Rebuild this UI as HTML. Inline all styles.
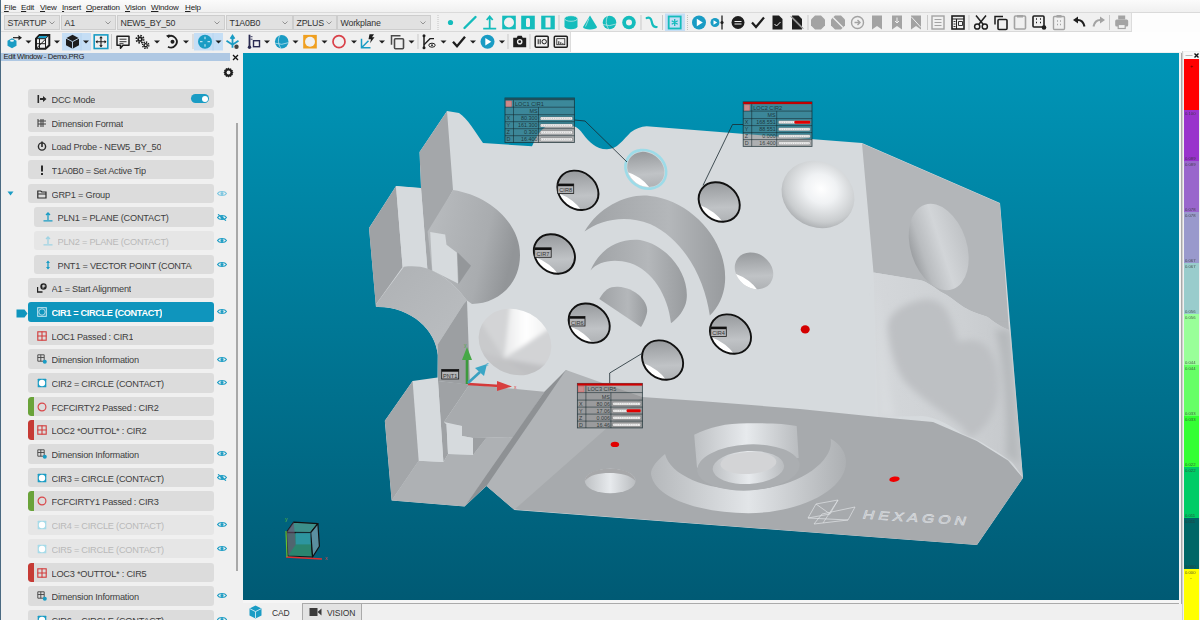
<!DOCTYPE html>
<html><head><meta charset="utf-8">
<style>
*{margin:0;padding:0;box-sizing:border-box}
html,body{width:1200px;height:620px;overflow:hidden;background:#f0f0f0;font-family:"Liberation Sans",sans-serif;position:relative}
.a{position:absolute}
#menubar{left:0;top:0;width:1200px;height:13px;background:linear-gradient(#fbfbfb,#f0f0f0);border-bottom:1px solid #dadada}
#menubar span{position:absolute;top:2.5px;font-size:8px;color:#222;letter-spacing:-0.15px}
#tb1{left:0;top:13px;width:1132px;height:19px;background:#f0f0f0;border-bottom:1px solid #d9d9d9;border-right:1px solid #dcdcdc}
#tb1r{left:1132px;top:13px;width:68px;height:19px;background:#fdfdfd}
#tb2{left:0;top:32px;width:571px;height:20px;background:#f0f0f0;border-right:1px solid #dcdcdc}
#tb2r{left:571px;top:32px;width:629px;height:20px;background:#fefefe}
.combo{position:absolute;top:15px;height:15px;background:#e1e1e1;border:1px solid #cdcdcd;font-size:8.8px;color:#333;line-height:14px;padding-left:2.5px;letter-spacing:-0.2px}
.combo i{position:absolute;right:4px;top:5px;width:6px;height:4px}
#lp{left:0;top:52px;width:243px;height:568px;background:#f0f0f0;border-left:1px solid #44627a}
#ttl{left:1px;top:52.5px;width:229px;height:8px;background:#afc8e3;font-size:7.6px;line-height:8.5px;color:#222;padding-left:2.5px;letter-spacing:-0.33px}
.row{position:absolute;left:28px;width:186px;height:19.5px;background:#dcdcdc;border-radius:3px;font-size:9.2px;color:#404040;line-height:22px;padding-left:23.5px;padding-right:22px;white-space:nowrap;overflow:hidden;letter-spacing:-0.22px}
.row.ind{left:34px;width:180px;padding-left:23.5px}
.row.dis{background:#e6e6e6;color:#b9b9b9}
.row.sel{background:#0f95bd;color:#fff;font-weight:bold;letter-spacing:-0.35px}
.row .ic{position:absolute;left:9px;top:5px;width:10px;height:10px}
.row.ind .ic{left:9px}
.eye{position:absolute;left:217px;width:10px;height:7px}
#vp{left:243px;top:53px;width:936px;height:547px;background:linear-gradient(#0096b8,#005a74)}
#tabs{left:243px;top:600px;width:957px;height:20px;background:#f0f0f0}
.bar{position:absolute;left:0;top:0;width:5.5px;height:19.5px;border-radius:3px 0 0 3px}
.tog{position:absolute;left:163px;top:5.5px;width:18px;height:9px;border-radius:5px;background:#1a9cc4}
.tog div{position:absolute;right:1.5px;top:1.5px;width:6px;height:6px;border-radius:3px;background:#fff}
</style></head><body>
<div id="menubar" class="a">
<span style="left:4px"><u>F</u>ile</span><span style="left:21px"><u>E</u>dit</span><span style="left:40px"><u>V</u>iew</span><span style="left:62px"><u>I</u>nsert</span><span style="left:86px"><u>O</u>peration</span><span style="left:125px"><u>V</u>ision</span><span style="left:151px"><u>W</u>indow</span><span style="left:185px"><u>H</u>elp</span>
</div>
<div id="tb1" class="a"></div><div id="tb1r" class="a"></div>
<div id="tb2" class="a"></div><div id="tb2r" class="a"></div>
<div class="combo" style="left:4px;width:56px">STARTUP<svg style="position:absolute;right:4px;top:5px" width="6" height="4" viewBox="0 0 6 4"><path d="M0.5 0.5L3 3L5.5 0.5" stroke="#8a8a8a" stroke-width="0.9" fill="none"/></svg></div>
<div class="combo" style="left:61px;width:55px">A1<svg style="position:absolute;right:4px;top:5px" width="6" height="4" viewBox="0 0 6 4"><path d="M0.5 0.5L3 3L5.5 0.5" stroke="#8a8a8a" stroke-width="0.9" fill="none"/></svg></div>
<div class="combo" style="left:117px;width:108px">NEW5_BY_50<svg style="position:absolute;right:4px;top:5px" width="6" height="4" viewBox="0 0 6 4"><path d="M0.5 0.5L3 3L5.5 0.5" stroke="#8a8a8a" stroke-width="0.9" fill="none"/></svg></div>
<div class="combo" style="left:226px;width:67px">T1A0B0<svg style="position:absolute;right:4px;top:5px" width="6" height="4" viewBox="0 0 6 4"><path d="M0.5 0.5L3 3L5.5 0.5" stroke="#8a8a8a" stroke-width="0.9" fill="none"/></svg></div>
<div class="combo" style="left:293px;width:44px">ZPLUS<svg style="position:absolute;right:4px;top:5px" width="6" height="4" viewBox="0 0 6 4"><path d="M0.5 0.5L3 3L5.5 0.5" stroke="#8a8a8a" stroke-width="0.9" fill="none"/></svg></div>
<div class="combo" style="left:337px;width:94px">Workplane<svg style="position:absolute;right:4px;top:5px" width="6" height="4" viewBox="0 0 6 4"><path d="M0.5 0.5L3 3L5.5 0.5" stroke="#8a8a8a" stroke-width="0.9" fill="none"/></svg></div>

<div id="lp" class="a"></div>
<div id="ttl" class="a">Edit Window - Demo.PRG</div>

<div id="vp" class="a"></div>
<div id="tabs" class="a"></div>
<div class="a" style="left:0;top:0;width:1px;height:620px;background:#4a6a82"></div><svg class="a" style="left:0;top:0" width="1200" height="53" viewBox="0 0 1200 53"><line x1="438" y1="15" x2="438" y2="30" stroke="#b8b8b8" stroke-width="0.8" stroke-dasharray="1 1"/><g transform="translate(450.5,22.5)"><circle r="2.6" fill="#14bcbc"/></g><g transform="translate(470,22.5)"><path d="M-5.5,5.5 L5.5,-5.5" stroke="#14bcbc" stroke-width="2.4" stroke-linecap="round"/></g><g transform="translate(489.7,22.5)"><path d="M-6.5,6.2 h13 M0,5.5 v-10 M-3,-2.5 l3,-3.5 3,3.5" stroke="#14bcbc" stroke-width="1.8" fill="none"/></g><g transform="translate(509,22.5)"><rect x="-6.8" y="-6.8" width="13.6" height="13.6" fill="#14bcbc"/><circle r="5" fill="#f0f0f0"/></g><g transform="translate(528,22.5)"><rect x="-6.8" y="-6.8" width="13.6" height="13.6" fill="#14bcbc"/><rect x="-2" y="-4.5" width="4" height="9" rx="1.5" fill="#f0f0f0"/></g><g transform="translate(548,22.5)"><rect x="-6.8" y="-6.8" width="13.6" height="13.6" fill="#14bcbc"/><rect x="-2.5" y="-5" width="5" height="10" fill="#f0f0f0"/></g><line x1="559" y1="15" x2="559" y2="30" stroke="#c9c9c9" stroke-width="1"/><g transform="translate(571,22.5)"><path d="M-6.5,-4 v8 a6.5,2.8 0 0 0 13,0 v-8z" fill="#14bcbc"/><ellipse cy="-4" rx="6.5" ry="2.8" fill="#14bcbc" stroke="#f0f0f0" stroke-width="0.6"/></g><g transform="translate(590,22.5)"><path d="M0,-7 L-7,4.5 a7,2.6 0 0 0 14,0z" fill="#14bcbc"/><path d="M-1,-4 L-4.5,4" stroke="#f0f0f0" stroke-width="0.6"/></g><g transform="translate(609.5,22.5)"><circle r="6.8" fill="#14bcbc"/><path d="M-6.5,2 Q0,4.5 6.5,1.5 M-2,-6.5 Q-5,0 -1,6.5" stroke="#f0f0f0" stroke-width="0.6" fill="none"/></g><g transform="translate(629,22.5)"><circle r="6.8" fill="#14bcbc"/><circle r="3" fill="#f0f0f0"/></g><line x1="641" y1="15" x2="641" y2="30" stroke="#c9c9c9" stroke-width="1"/><g transform="translate(651.7,22.5)"><path d="M-5,-4.5 Q-1,-6 0,-1 Q1,5 5,4.5" stroke="#14bcbc" stroke-width="2.2" fill="none" stroke-linecap="round"/></g><line x1="662.5" y1="15" x2="662.5" y2="30" stroke="#c9c9c9" stroke-width="1"/><rect x="665" y="13.5" width="20" height="17.5" fill="#c5def5"/><g transform="translate(674.7,22.5)"><rect x="-6" y="-6" width="12" height="12" fill="none" stroke="#14bcbc" stroke-width="1.8"/><path d="M0,-3.5 v7 M-3,-1.8 l6,3.6 M3,-1.8 l-6,3.6" stroke="#14bcbc" stroke-width="1.3"/></g><line x1="687.5" y1="15" x2="687.5" y2="30" stroke="#b8b8b8" stroke-width="0.8" stroke-dasharray="1 1"/><g transform="translate(699,22.5)"><circle r="7" fill="#1a9cc4"/><path d="M-2.2,-3.8 L3.8,0 L-2.2,3.8z" fill="#fff"/></g><g transform="translate(718,22.5)"><circle cx="-3" r="4.5" fill="#1a9cc4"/><path d="M-4.5,-2.2 L-0.8,0 L-4.5,2.2z" fill="#fff"/><path d="M4,-7 v14" stroke="#1e1e1e" stroke-width="1.3"/><circle cx="4" r="1.6" fill="#1e1e1e"/></g><g transform="translate(738,22.5)"><circle r="6.5" fill="#1e1e1e"/><path d="M-3.5,-1 h7 M-3.5,1.5 h7" stroke="#f0f0f0" stroke-width="1"/></g><g transform="translate(758,22.5)"><path d="M-6,0 L-2,4.5 L6,-5" stroke="#1e1e1e" stroke-width="2.2" fill="none"/></g><g transform="translate(777.5,22.5)"><path d="M-5,-7 h6.5 l3.5,3.5 v10.5 h-10z" fill="#1e1e1e"/><path d="M-3,1.5 l2,2 4,-4" stroke="#f0f0f0" stroke-width="1" fill="none"/></g><g transform="translate(797,22.5)"><path d="M-5,-7 h6.5 l3.5,3.5 v10.5 h-10z" fill="#1e1e1e"/><path d="M-6,-6 l12,12" stroke="#f0f0f0" stroke-width="1.6"/><path d="M-6,-6 l12,12" stroke="#1e1e1e" stroke-width="0.8"/></g><line x1="808" y1="15" x2="808" y2="30" stroke="#c9c9c9" stroke-width="1"/><g transform="translate(818,22.5)"><path d="M-3,-7 h6 l4,4 v6 l-4,4 h-6 l-4,-4 v-6z" fill="#a3a3a3"/></g><g transform="translate(838,22.5)"><path d="M-3,-7 h6 l4,4 v6 l-4,4 h-6 l-4,-4 v-6z" fill="#a3a3a3"/><path d="M-5,-5 l10,10" stroke="#f0f0f0" stroke-width="1.2"/></g><g transform="translate(857.5,22.5)"><circle r="6" fill="none" stroke="#a3a3a3" stroke-width="1.4"/><path d="M-3,0 h5 M0,-2.5 l2.5,2.5 -2.5,2.5" stroke="#a3a3a3" stroke-width="1.4" fill="none"/></g><g transform="translate(877,22.5)"><path d="M-5,-7 h10 v14 l-5,-3.5 -5,3.5z" fill="#a3a3a3"/></g><g transform="translate(897,22.5)"><path d="M-5,-7 h10 v14 l-5,-3.5 -5,3.5z" fill="#a3a3a3"/><path d="M0,-5 v5 M-2,-1.5 l2,2 2,-2" stroke="#f0f0f0" stroke-width="1" fill="none"/></g><g transform="translate(916,22.5)"><path d="M-5,-7 h10 v14 l-5,-3.5 -5,3.5z" fill="#a3a3a3"/><path d="M-5,-6 l10,11" stroke="#f0f0f0" stroke-width="1"/></g><line x1="927.5" y1="15" x2="927.5" y2="30" stroke="#c9c9c9" stroke-width="1"/><g transform="translate(938,22.5)"><rect x="-6" y="-6.5" width="12" height="13" fill="none" stroke="#a3a3a3" stroke-width="1.4"/><path d="M-3.5,-3 h7 M-3.5,0 h7 M-3.5,3 h7" stroke="#a3a3a3" stroke-width="1.2"/></g><g transform="translate(958,22.5)"><rect x="-6" y="-6.5" width="12" height="13" fill="none" stroke="#1e1e1e" stroke-width="1.6"/><path d="M-6,-3.5 h12 M-1.5,-3.5 v10" stroke="#1e1e1e" stroke-width="1"/><path d="M-4.5,-1 h2 M-4.5,1.5 h2 M-4.5,4 h2 M0.5,-1 h4 v4 h-4z" stroke="#1e1e1e" stroke-width="0.9" fill="none"/></g><line x1="969" y1="15" x2="969" y2="30" stroke="#c9c9c9" stroke-width="1"/><g transform="translate(981,22.5)"><circle cx="-3.8" cy="4" r="2.6" fill="none" stroke="#1e1e1e" stroke-width="1.5"/><circle cx="3.8" cy="4" r="2.6" fill="none" stroke="#1e1e1e" stroke-width="1.5"/><path d="M-2.3,2 L5,-7 M2.3,2 L-5,-7" stroke="#1e1e1e" stroke-width="1.5"/></g><g transform="translate(1001,22.5)"><path d="M-6,2 v-8 h8" stroke="#1e1e1e" stroke-width="1.5" fill="none"/><rect x="-3" y="-3" width="9" height="10" rx="1" fill="none" stroke="#1e1e1e" stroke-width="1.6"/></g><g transform="translate(1020,22.5)"><rect x="-5.5" y="-6.5" width="11" height="13" rx="1" fill="none" stroke="#a3a3a3" stroke-width="1.6"/><rect x="-3" y="-7.5" width="6" height="2.5" fill="#a3a3a3"/></g><g transform="translate(1039,22.5)"><rect x="-6" y="-6.5" width="11" height="11" rx="1" fill="none" stroke="#1e1e1e" stroke-width="1.6"/><path d="M-3,-3.5 h1 M1,-3.5 h1 M-3,0 h1 M1,0 h1" stroke="#1e1e1e" stroke-width="1.4"/><circle cx="5" cy="5" r="2.3" fill="#1e1e1e"/></g><g transform="translate(1059,22.5)"><rect x="-5.5" y="-6" width="11" height="13" rx="1" fill="none" stroke="#a3a3a3" stroke-width="1.4"/><rect x="-2.5" y="-7.5" width="5" height="2.5" fill="#a3a3a3"/><path d="M-2,-1.5 h1 M1,-1.5 h1 M-2,2 h1 M1,2 h1" stroke="#a3a3a3" stroke-width="1.3"/></g><g transform="translate(1079,22.5)"><path d="M5.5,4 Q4,-3 -2,-2.5 L-2,-2.5" stroke="#1e1e1e" stroke-width="2" fill="none"/><path d="M-6,-2.5 L-1,-6 L-1,1z" fill="#1e1e1e"/></g><g transform="translate(1099,22.5)"><path d="M-5.5,4 Q-4,-3 2,-2.5" stroke="#a3a3a3" stroke-width="2" fill="none"/><path d="M6,-2.5 L1,-6 L1,1z" fill="#a3a3a3"/></g><line x1="1109.5" y1="15" x2="1109.5" y2="30" stroke="#c9c9c9" stroke-width="1"/><g transform="translate(1121.7,22.5)"><rect x="-3.5" y="-7" width="7" height="4" fill="#a3a3a3"/><rect x="-6.5" y="-3" width="13" height="7" rx="1.5" fill="#a3a3a3"/><rect x="-3.5" y="2" width="7" height="4" fill="#f0f0f0" stroke="#a3a3a3" stroke-width="1.2"/></g><rect x="62" y="33" width="29" height="17.5" fill="#c5def5"/><line x1="81" y1="33" x2="81" y2="50.5" stroke="#b3d2ee" stroke-width="0.8"/><rect x="194" y="33" width="29" height="17.5" fill="#c5def5"/><line x1="213" y1="33" x2="213" y2="50.5" stroke="#b3d2ee" stroke-width="0.8"/><g transform="translate(12,43.2)"><path d="M0,-5 L4.5,-2.5 V2.5 L0,5 L-4.5,2.5 V-2.5z" fill="#1a9cc4"/><ellipse cy="-2.5" rx="2" ry="1" fill="#eaf6fb"/></g><g transform="translate(17,37.7)"><path d="M-4,0 h6" stroke="#1e1e1e" stroke-width="1.2"/><path d="M1.5,-2.5 L5,0 L1.5,2.5z" fill="#1e1e1e"/></g><path d="M25.5,40.400000000000006 h6 l-3,3z" fill="#1e1e1e"/><g transform="translate(42.5,41.7)"><path d="M-6.5,-3 L-3,-6.8 H6.8 V3.5 L3,7 H-6.5z" fill="none" stroke="#1e1e1e" stroke-width="2"/><path d="M-3,-5.8 H5.5 L3,-3.2 H-5z" fill="#1a9cc4"/><path d="M-6.5,-3 H3 V7 M3,-3 L6.8,-6.8 M-3,-3 V7 M-6.5,2 H3 M-6,6.5 L3,-2.5" stroke="#1e1e1e" stroke-width="1" fill="none"/></g><path d="M54,40.400000000000006 h6 l-3,3z" fill="#1e1e1e"/><g transform="translate(72.5,41.7)"><path d="M0,-7 L6.5,-3.5 V3.5 L0,7 L-6.5,3.5 V-3.5z" fill="#1e1e1e"/><path d="M-6.5,-3.5 L0,0 L6.5,-3.5 M0,0 V7" stroke="#c5def5" stroke-width="0.9" fill="none"/></g><path d="M83,40.400000000000006 h6 l-3,3z" fill="#1e1e1e"/><g transform="translate(101,41.7)"><rect x="-6.8" y="-6.8" width="13.6" height="13.6" fill="none" stroke="#1a9cc4" stroke-width="1.6"/><path d="M0,-5 V5 M-5,0 H5" stroke="#1e1e1e" stroke-width="1.1"/><path d="M0,-5.5 l-1.8,2 h3.6z M0,5.5 l-1.8,-2 h3.6z M-5.5,0 l2,-1.8 v3.6z M5.5,0 l-2,-1.8 v3.6z" fill="#1e1e1e"/></g><line x1="111.5" y1="34" x2="111.5" y2="49" stroke="#c9c9c9" stroke-width="1"/><g transform="translate(123,41.7)"><path d="M-6,-5.5 H6 V3.5 H0 L-2.5,6.5 V3.5 H-6z" fill="none" stroke="#1e1e1e" stroke-width="1.5" stroke-linejoin="round"/><path d="M-3.5,-2.5 h7 M-3.5,0 h7 M-3.5,2 h4" stroke="#1e1e1e" stroke-width="0.9"/></g><g transform="translate(142.5,41.7)"><circle cx="-2.5" cy="-2.5" r="3.6" fill="none" stroke="#1e1e1e" stroke-width="1.8" stroke-dasharray="1.6 1.2"/><circle cx="-2.5" cy="-2.5" r="2.6" fill="#1e1e1e"/><circle cx="-2.5" cy="-2.5" r="1" fill="#f0f0f0"/><circle cx="3.2" cy="3.5" r="3.1" fill="none" stroke="#1e1e1e" stroke-width="1.5" stroke-dasharray="1.4 1"/><circle cx="3.2" cy="3.5" r="2.2" fill="#1e1e1e"/><circle cx="3.2" cy="3.5" r="0.9" fill="#f0f0f0"/></g><path d="M154,40.400000000000006 h6 l-3,3z" fill="#1e1e1e"/><g transform="translate(172.5,41.7)"><path d="M-4.5,-5 A5.8,5.8 0 1 1 -4.5,5" stroke="#1e1e1e" stroke-width="1.8" fill="none"/><circle cx="0" cy="0" r="2" fill="#1e1e1e"/><path d="M-6.5,-6 L-3,-7.5 L-3.5,-3.5z" fill="#1e1e1e"/></g><path d="M183,40.400000000000006 h6 l-3,3z" fill="#1e1e1e"/><line x1="193" y1="34" x2="193" y2="49" stroke="#c9c9c9" stroke-width="1"/><g transform="translate(205,41.7)"><circle r="7" fill="#1a9cc4"/><path d="M0,-5 v2.5 M0,5 v-2.5 M-5,0 h2.5 M5,0 h-2.5" stroke="#dff2f8" stroke-width="1"/></g><path d="M215.5,40.400000000000006 h6 l-3,3z" fill="#1e1e1e"/><g transform="translate(232.5,41.7)"><path d="M0,6 V-5 M-6,-1 L0,3 L6,-1 M-2,-3 L0,-6 L2,-3" stroke="#1a9cc4" stroke-width="1.8" fill="none"/><circle cx="4" cy="5" r="2.2" fill="#444"/></g><g transform="translate(252.5,41.7)"><path d="M-3,-7 V5" stroke="#2a2a50" stroke-width="1.8"/><circle cx="-3" cy="5.5" r="1.7" fill="#2a2a50"/><path d="M-2,-5 h2 M-2,-2.5 h2" stroke="#2a2a50" stroke-width="0.9"/><rect x="1" y="-1" width="6" height="6" fill="none" stroke="#2a2a50" stroke-width="1.4"/></g><path d="M264,40.400000000000006 h6 l-3,3z" fill="#1e1e1e"/><g transform="translate(281.7,41.7)"><circle r="6.8" fill="#1a9cc4"/><path d="M-6.5,1.5 Q0,4 6.5,1 M-2,-6.5 Q-5,0 -1,6.5" stroke="#e8f6fa" stroke-width="0.6" fill="none"/></g><path d="M292.5,40.400000000000006 h6 l-3,3z" fill="#1e1e1e"/><g transform="translate(310,41.7)"><rect x="-6.8" y="-6.8" width="13.6" height="13.6" fill="#f0a020"/><circle r="5" fill="#f0f0f0"/></g><path d="M321.5,40.400000000000006 h6 l-3,3z" fill="#1e1e1e"/><g transform="translate(339,41.7)"><circle r="6" fill="none" stroke="#d94048" stroke-width="1.7"/></g><path d="M351,40.400000000000006 h6 l-3,3z" fill="#1e1e1e"/><g transform="translate(367.5,41.7)"><path d="M-6,-3 V6 H3 M-6,6 L1,-1" stroke="#1a9cc4" stroke-width="1.5" fill="none"/><path d="M2,-7.5 h4.5 l-2,3 h2.5 l-4.5,6 1,-4 h-2.5z" fill="#1e1e1e"/></g><path d="M379,40.400000000000006 h6 l-3,3z" fill="#1e1e1e"/><g transform="translate(397.5,41.7)"><path d="M-6,3 V-6 H3" stroke="#4a4a4a" stroke-width="1.5" fill="none"/><rect x="-3" y="-3" width="9" height="10" rx="1" fill="none" stroke="#4a4a4a" stroke-width="1.6"/></g><path d="M408.5,40.400000000000006 h6 l-3,3z" fill="#1e1e1e"/><line x1="418" y1="34" x2="418" y2="49" stroke="#c9c9c9" stroke-width="1"/><g transform="translate(429,41.7)"><path d="M-5,-6 V6" stroke="#1e1e1e" stroke-width="1.5"/><circle cx="-5" cy="-6" r="1.5" fill="#1e1e1e"/><circle cx="-5" cy="6" r="1.5" fill="#1e1e1e"/><path d="M-5,3 L1,-3 H5" stroke="#1e1e1e" stroke-width="1.3" fill="none"/><ellipse cx="3" cy="3.5" rx="3.2" ry="2" fill="none" stroke="#1e1e1e" stroke-width="1"/><circle cx="3" cy="3.5" r="0.9" fill="#1e1e1e"/></g><path d="M440.5,40.400000000000006 h6 l-3,3z" fill="#1e1e1e"/><g transform="translate(459,41.7)"><path d="M-6,0 L-2,4.5 L6,-5" stroke="#1e1e1e" stroke-width="2.3" fill="none"/></g><path d="M470,40.400000000000006 h6 l-3,3z" fill="#1e1e1e"/><g transform="translate(487.5,41.7)"><circle r="7" fill="#1a9cc4"/><path d="M-2.2,-3.8 L3.8,0 L-2.2,3.8z" fill="#fff"/></g><path d="M499,40.400000000000006 h6 l-3,3z" fill="#1e1e1e"/><line x1="508" y1="34" x2="508" y2="49" stroke="#c9c9c9" stroke-width="1"/><g transform="translate(519.7,41.7)"><path d="M-6.5,-4 H-3 L-2,-6 H2 L3,-4 H6.5 V5.5 H-6.5z" fill="#1e1e1e"/><circle r="2.8" fill="#f0f0f0"/><circle r="1.4" fill="#1e1e1e"/></g><line x1="530" y1="34" x2="530" y2="49" stroke="#c9c9c9" stroke-width="1"/><g transform="translate(541.7,41.7)"><rect x="-6.5" y="-5.5" width="13" height="11" rx="1" fill="none" stroke="#1e1e1e" stroke-width="1.5"/><path d="M-3.5,-2.5 v5 M-1.5,-2.5 v5" stroke="#1e1e1e" stroke-width="1"/><circle cx="2.5" cy="0" r="2.2" fill="none" stroke="#1e1e1e" stroke-width="1"/></g><g transform="translate(560.8,41.7)"><rect x="-6.5" y="-5.5" width="13" height="11" rx="1" fill="none" stroke="#1e1e1e" stroke-width="1.5"/><rect x="-4" y="-3" width="8" height="6" fill="none" stroke="#1e1e1e" stroke-width="0.8"/><path d="M-2,2.5 v-3 M0,2.5 v-2 M2,2.5 v-1" stroke="#1e1e1e" stroke-width="1"/></g></svg><div class="row " style="top:88.90px"><svg class="ic" viewBox="0 0 10 10"><rect x="0.5" y="1" width="1.6" height="8" fill="#2b2b2b"/><path d="M3 4h3V2l3.5 3L6 8V6H3z" fill="#2b2b2b"/></svg><span style="display:inline-block;max-width:134.5px;overflow:hidden;vertical-align:top">DCC Mode</span><div class="tog"><div></div></div></div><div class="row " style="top:112.58px"><svg class="ic" viewBox="0 0 10 10"><path d="M1 1v8M4 1v8M1 3h8M1 6h8M6 1v8" stroke="#444" stroke-width="1.1" fill="none"/></svg><span style="display:inline-block;max-width:134.5px;overflow:hidden;vertical-align:top">Dimension Format</span></div><div class="row " style="top:136.26px"><svg class="ic" viewBox="0 0 10 10"><circle cx="5" cy="5.5" r="3.6" stroke="#2b2b2b" stroke-width="1.4" fill="none"/><rect x="4.2" y="0.5" width="1.6" height="5.5" fill="#2b2b2b"/></svg><span style="display:inline-block;max-width:134.5px;overflow:hidden;vertical-align:top">Load Probe - NEW5_BY_50</span></div><div class="row " style="top:159.94px"><svg class="ic" viewBox="0 0 10 10"><rect x="4" y="0.5" width="2" height="6" fill="#2b2b2b"/><rect x="4" y="8" width="2" height="2" fill="#2b2b2b"/></svg><span style="display:inline-block;max-width:134.5px;overflow:hidden;vertical-align:top">T1A0B0 = Set Active Tip</span></div><div class="row " style="top:183.62px"><svg class="ic" viewBox="0 0 10 10"><path d="M0.8 2h3l1 1h4.2v6H0.8z" stroke="#2b2b2b" stroke-width="1.2" fill="none"/><path d="M1 5h8" stroke="#2b2b2b" stroke-width="1"/></svg><span style="display:inline-block;max-width:134.5px;overflow:hidden;vertical-align:top">GRP1 = Group</span></div><svg class="eye" style="top:189.9px" viewBox="0 0 10 7"><path d="M0.5 3.5C2 0.8 8 0.8 9.5 3.5 8 6.2 2 6.2 0.5 3.5z" fill="none" stroke="#7cc6e0" stroke-width="1.1"/><circle cx="5" cy="3.5" r="1.5" fill="#7cc6e0"/></svg><div class="row ind" style="top:207.30px"><svg class="ic" viewBox="0 0 10 10"><path d="M5 1v7M0.5 8.8h9M3 3l2-2 2 2" stroke="#1a9cc4" stroke-width="1.3" fill="none"/></svg><span style="display:inline-block;max-width:134.5px;overflow:hidden;vertical-align:top">PLN1 = PLANE (CONTACT)</span></div><svg class="eye" style="top:213.6px" viewBox="0 0 10 7"><path d="M0.5 3.5C2 0.8 8 0.8 9.5 3.5 8 6.2 2 6.2 0.5 3.5z" fill="none" stroke="#1a9cc4" stroke-width="1.1"/><circle cx="5" cy="3.5" r="1.5" fill="#1a9cc4"/><path d="M1 0.3L9 6.7" stroke="#1a9cc4" stroke-width="1.1"/></svg><div class="row ind dis" style="top:230.98px"><svg class="ic" viewBox="0 0 10 10"><path d="M5 1v7M0.5 8.8h9M3 3l2-2 2 2" stroke="#9fd3e3" stroke-width="1.3" fill="none"/></svg><span style="display:inline-block;max-width:134.5px;overflow:hidden;vertical-align:top">PLN2 = PLANE (CONTACT)</span></div><svg class="eye" style="top:237.2px" viewBox="0 0 10 7"><path d="M0.5 3.5C2 0.8 8 0.8 9.5 3.5 8 6.2 2 6.2 0.5 3.5z" fill="none" stroke="#1a9cc4" stroke-width="1.1"/><circle cx="5" cy="3.5" r="1.5" fill="#1a9cc4"/></svg><div class="row ind" style="top:254.66px"><svg class="ic" viewBox="0 0 10 10"><path d="M5 1.5v7" stroke="#1a9cc4" stroke-width="1.3"/><path d="M3 3l2-2.5 2 2.5zM3 7l2 2.5 2-2.5z" fill="#1a9cc4"/></svg><span style="display:inline-block;max-width:134.5px;overflow:hidden;vertical-align:top">PNT1 = VECTOR POINT (CONTACT)</span></div><svg class="eye" style="top:260.9px" viewBox="0 0 10 7"><path d="M0.5 3.5C2 0.8 8 0.8 9.5 3.5 8 6.2 2 6.2 0.5 3.5z" fill="none" stroke="#1a9cc4" stroke-width="1.1"/><circle cx="5" cy="3.5" r="1.5" fill="#1a9cc4"/></svg><div class="row " style="top:278.34px"><svg class="ic" viewBox="0 0 10 10"><circle cx="6.5" cy="3.5" r="3.2" fill="#222"/><path d="M0.5 4v5h5" stroke="#222" stroke-width="1.4" fill="none"/><path d="M6 2.2h1.2a0.8 0.8 0 0 1 0 1.6H6v-1.6M6 2v3.5" stroke="#fff" stroke-width="0.7" fill="none"/></svg><span style="display:inline-block;max-width:134.5px;overflow:hidden;vertical-align:top">A1 = Start Alignment</span></div><div class="row sel" style="top:302.02px"><svg class="ic" viewBox="0 0 10 10"><rect x="0.7" y="0.7" width="8.6" height="8.6" fill="none" stroke="#cfe9f3" stroke-width="1"/><circle cx="5" cy="5" r="3.2" fill="none" stroke="#cfe9f3" stroke-width="0.8"/></svg><span style="display:inline-block;max-width:134.5px;overflow:hidden;vertical-align:top">CIR1 = CIRCLE (CONTACT)</span></div><svg class="eye" style="top:308.3px" viewBox="0 0 10 7"><path d="M0.5 3.5C2 0.8 8 0.8 9.5 3.5 8 6.2 2 6.2 0.5 3.5z" fill="none" stroke="#1a9cc4" stroke-width="1.1"/><circle cx="5" cy="3.5" r="1.5" fill="#1a9cc4"/></svg><div class="row " style="top:325.70px"><svg class="ic" viewBox="0 0 10 10"><rect x="0.8" y="0.8" width="8.4" height="8.4" fill="none" stroke="#d23b3b" stroke-width="1.1"/><path d="M5 0.5v9M0.5 5h9" stroke="#d23b3b" stroke-width="1.1"/></svg><span style="display:inline-block;max-width:134.5px;overflow:hidden;vertical-align:top">LOC1 Passed : CIR1</span></div><div class="row " style="top:349.38px"><svg class="ic" viewBox="0 0 10 10"><path d="M0.8 0.8h6.4v6.4H0.8zM0.8 3.5h6.4M3.8 0.8v6.4" stroke="#444" stroke-width="0.9" fill="none"/><circle cx="7.8" cy="7.8" r="2" fill="#1a9cc4"/></svg><span style="display:inline-block;max-width:134.5px;overflow:hidden;vertical-align:top">Dimension Information</span></div><svg class="eye" style="top:355.6px" viewBox="0 0 10 7"><path d="M0.5 3.5C2 0.8 8 0.8 9.5 3.5 8 6.2 2 6.2 0.5 3.5z" fill="none" stroke="#1a9cc4" stroke-width="1.1"/><circle cx="5" cy="3.5" r="1.5" fill="#1a9cc4"/></svg><div class="row " style="top:373.06px"><svg class="ic" viewBox="0 0 10 10"><rect x="0.7" y="0.7" width="8.6" height="8.6" fill="#1a9cc4" rx="0.5"/><circle cx="5" cy="5" r="3.2" fill="#fff"/></svg><span style="display:inline-block;max-width:134.5px;overflow:hidden;vertical-align:top">CIR2 = CIRCLE (CONTACT)</span></div><svg class="eye" style="top:379.3px" viewBox="0 0 10 7"><path d="M0.5 3.5C2 0.8 8 0.8 9.5 3.5 8 6.2 2 6.2 0.5 3.5z" fill="none" stroke="#1a9cc4" stroke-width="1.1"/><circle cx="5" cy="3.5" r="1.5" fill="#1a9cc4"/></svg><div class="row " style="top:396.74px"><svg class="ic" viewBox="0 0 10 10"><circle cx="5" cy="5" r="3.9" stroke="#d9474a" stroke-width="1.2" fill="none"/></svg><span style="display:inline-block;max-width:134.5px;overflow:hidden;vertical-align:top">FCFCIRTY2 Passed : CIR2</span><div class="bar" style="background:#6aa33a"></div></div><div class="row " style="top:420.42px"><svg class="ic" viewBox="0 0 10 10"><rect x="0.8" y="0.8" width="8.4" height="8.4" fill="none" stroke="#d23b3b" stroke-width="1.1"/><path d="M5 0.5v9M0.5 5h9" stroke="#d23b3b" stroke-width="1.1"/></svg><span style="display:inline-block;max-width:134.5px;overflow:hidden;vertical-align:top">LOC2 *OUTTOL* : CIR2</span><div class="bar" style="background:#c63b35"></div></div><div class="row " style="top:444.10px"><svg class="ic" viewBox="0 0 10 10"><path d="M0.8 0.8h6.4v6.4H0.8zM0.8 3.5h6.4M3.8 0.8v6.4" stroke="#444" stroke-width="0.9" fill="none"/><circle cx="7.8" cy="7.8" r="2" fill="#1a9cc4"/></svg><span style="display:inline-block;max-width:134.5px;overflow:hidden;vertical-align:top">Dimension Information</span></div><svg class="eye" style="top:450.4px" viewBox="0 0 10 7"><path d="M0.5 3.5C2 0.8 8 0.8 9.5 3.5 8 6.2 2 6.2 0.5 3.5z" fill="none" stroke="#1a9cc4" stroke-width="1.1"/><circle cx="5" cy="3.5" r="1.5" fill="#1a9cc4"/></svg><div class="row " style="top:467.78px"><svg class="ic" viewBox="0 0 10 10"><rect x="0.7" y="0.7" width="8.6" height="8.6" fill="#1a9cc4" rx="0.5"/><circle cx="5" cy="5" r="3.2" fill="#fff"/></svg><span style="display:inline-block;max-width:134.5px;overflow:hidden;vertical-align:top">CIR3 = CIRCLE (CONTACT)</span></div><svg class="eye" style="top:474.0px" viewBox="0 0 10 7"><path d="M0.5 3.5C2 0.8 8 0.8 9.5 3.5 8 6.2 2 6.2 0.5 3.5z" fill="none" stroke="#1a9cc4" stroke-width="1.1"/><circle cx="5" cy="3.5" r="1.5" fill="#1a9cc4"/><path d="M1 0.3L9 6.7" stroke="#1a9cc4" stroke-width="1.1"/></svg><div class="row " style="top:491.46px"><svg class="ic" viewBox="0 0 10 10"><circle cx="5" cy="5" r="3.9" stroke="#d9474a" stroke-width="1.2" fill="none"/></svg><span style="display:inline-block;max-width:134.5px;overflow:hidden;vertical-align:top">FCFCIRTY1 Passed : CIR3</span><div class="bar" style="background:#6aa33a"></div></div><div class="row dis" style="top:515.14px"><svg class="ic" viewBox="0 0 10 10"><rect x="0.7" y="0.7" width="8.6" height="8.6" fill="#a6dbe9" rx="0.5"/><circle cx="5" cy="5" r="3.2" fill="#fff"/></svg><span style="display:inline-block;max-width:134.5px;overflow:hidden;vertical-align:top">CIR4 = CIRCLE (CONTACT)</span></div><svg class="eye" style="top:521.4px" viewBox="0 0 10 7"><path d="M0.5 3.5C2 0.8 8 0.8 9.5 3.5 8 6.2 2 6.2 0.5 3.5z" fill="none" stroke="#1a9cc4" stroke-width="1.1"/><circle cx="5" cy="3.5" r="1.5" fill="#1a9cc4"/></svg><div class="row dis" style="top:538.82px"><svg class="ic" viewBox="0 0 10 10"><rect x="0.7" y="0.7" width="8.6" height="8.6" fill="#a6dbe9" rx="0.5"/><circle cx="5" cy="5" r="3.2" fill="#fff"/></svg><span style="display:inline-block;max-width:134.5px;overflow:hidden;vertical-align:top">CIR5 = CIRCLE (CONTACT)</span></div><svg class="eye" style="top:545.1px" viewBox="0 0 10 7"><path d="M0.5 3.5C2 0.8 8 0.8 9.5 3.5 8 6.2 2 6.2 0.5 3.5z" fill="none" stroke="#1a9cc4" stroke-width="1.1"/><circle cx="5" cy="3.5" r="1.5" fill="#1a9cc4"/></svg><div class="row " style="top:562.50px"><svg class="ic" viewBox="0 0 10 10"><rect x="0.8" y="0.8" width="8.4" height="8.4" fill="none" stroke="#d23b3b" stroke-width="1.1"/><path d="M5 0.5v9M0.5 5h9" stroke="#d23b3b" stroke-width="1.1"/></svg><span style="display:inline-block;max-width:134.5px;overflow:hidden;vertical-align:top">LOC3 *OUTTOL* : CIR5</span><div class="bar" style="background:#c63b35"></div></div><div class="row " style="top:586.18px"><svg class="ic" viewBox="0 0 10 10"><path d="M0.8 0.8h6.4v6.4H0.8zM0.8 3.5h6.4M3.8 0.8v6.4" stroke="#444" stroke-width="0.9" fill="none"/><circle cx="7.8" cy="7.8" r="2" fill="#1a9cc4"/></svg><span style="display:inline-block;max-width:134.5px;overflow:hidden;vertical-align:top">Dimension Information</span></div><svg class="eye" style="top:592.4px" viewBox="0 0 10 7"><path d="M0.5 3.5C2 0.8 8 0.8 9.5 3.5 8 6.2 2 6.2 0.5 3.5z" fill="none" stroke="#1a9cc4" stroke-width="1.1"/><circle cx="5" cy="3.5" r="1.5" fill="#1a9cc4"/></svg><div class="row " style="top:609.86px"><svg class="ic" viewBox="0 0 10 10"><rect x="0.7" y="0.7" width="8.6" height="8.6" fill="#1a9cc4" rx="0.5"/><circle cx="5" cy="5" r="3.2" fill="#fff"/></svg><span style="display:inline-block;max-width:134.5px;overflow:hidden;vertical-align:top">CIR6 = CIRCLE (CONTACT)</span></div><svg class="eye" style="top:616.1px" viewBox="0 0 10 7"><path d="M0.5 3.5C2 0.8 8 0.8 9.5 3.5 8 6.2 2 6.2 0.5 3.5z" fill="none" stroke="#1a9cc4" stroke-width="1.1"/><circle cx="5" cy="3.5" r="1.5" fill="#1a9cc4"/></svg><svg class="a" style="left:7px;top:191px" width="7" height="5" viewBox="0 0 7 5"><path d="M0.5 0.5h6L3.5 4.5z" fill="#1a9cc4"/></svg><svg class="a" style="left:16px;top:308.5px" width="12" height="9" viewBox="0 0 12 9"><path d="M0.5 0.5h8l3 4-3 4h-8z" fill="#0f95bd"/></svg><svg class="a" style="left:222.5px;top:66.5px" width="11" height="11" viewBox="0 0 24 24"><path d="M12 1l2.2 2.6 3.3-.9.9 3.3 3.3.9-.9 3.3L23 12l-2.2 2.2.9 3.3-3.3.9-.9 3.3-3.3-.9L12 23l-2.2-2.2-3.3.9-.9-3.3-3.3-.9.9-3.3L1 12l2.2-2.2-.9-3.3 3.3-.9.9-3.3 3.3.9z" fill="#1e1e1e"/><circle cx="12" cy="12" r="4.2" fill="#f0f0f0"/></svg><svg class="a" style="left:232px;top:54px" width="7" height="7" viewBox="0 0 7 7"><path d="M1 1l5 5M6 1L1 6" stroke="#111" stroke-width="1.3"/></svg><div class="a" style="left:236px;top:123px;width:2px;height:448px;background:#a8a8a8"></div><svg class="a" style="left:0;top:0" width="1200" height="620" viewBox="0 0 1200 620"><defs>
<linearGradient id="hg" x1="0" y1="0" x2="1" y2="1"><stop offset="0" stop-color="#8a8d90"/><stop offset="0.6" stop-color="#c0c3c6"/><stop offset="1" stop-color="#a5a8ab"/></linearGradient>
<linearGradient id="wallg" x1="0" y1="0" x2="1" y2="1"><stop offset="0" stop-color="#aeb1b4"/><stop offset="1" stop-color="#bcbfc2"/></linearGradient><linearGradient id="pocket" x1="0" y1="0" x2="1" y2="0.3"><stop offset="0" stop-color="#babdc0"/><stop offset="0.7" stop-color="#a9acaf"/><stop offset="1" stop-color="#929598"/></linearGradient>
<linearGradient id="cres" x1="0" y1="0" x2="1" y2="0"><stop offset="0" stop-color="#9fa2a5"/><stop offset="0.6" stop-color="#b4b7ba"/><stop offset="1" stop-color="#989b9e"/></linearGradient>
<radialGradient id="sph" cx="0.5" cy="0.4" r="0.62"><stop offset="0" stop-color="#ffffff"/><stop offset="0.35" stop-color="#f0f2f4"/><stop offset="0.8" stop-color="#c9ccce"/><stop offset="1" stop-color="#a9acaf"/></radialGradient>
<linearGradient id="conew" x1="0" y1="0" x2="1" y2="0"><stop offset="0" stop-color="#e8e9ea"/><stop offset="0.35" stop-color="#ffffff"/><stop offset="1" stop-color="#e4e5e6"/></linearGradient><radialGradient id="cone" cx="0.6" cy="0.55" r="0.6"><stop offset="0" stop-color="#fafafa"/><stop offset="0.6" stop-color="#d9dadc"/><stop offset="1" stop-color="#b5b6b8"/></radialGradient>
<linearGradient id="band" x1="0" y1="0" x2="1" y2="0"><stop offset="0" stop-color="#b5b8bb"/><stop offset="0.5" stop-color="#e2e5e8"/><stop offset="1" stop-color="#adb0b3"/></linearGradient>
<linearGradient id="boss" x1="0" y1="0" x2="1" y2="0"><stop offset="0" stop-color="#bec1c4"/><stop offset="0.5" stop-color="#e7eaed"/><stop offset="1" stop-color="#b9bcbf"/></linearGradient>
<linearGradient id="rhole" x1="0" y1="0" x2="1" y2="0"><stop offset="0" stop-color="#9da0a3"/><stop offset="0.2" stop-color="#b9bcbf"/><stop offset="0.55" stop-color="#d2d5d8"/><stop offset="1" stop-color="#c0c3c6"/></linearGradient>
<linearGradient id="curv" x1="0" y1="0" x2="1" y2="0"><stop offset="0" stop-color="#d4d7da"/><stop offset="0.6" stop-color="#cdd0d3"/><stop offset="1" stop-color="#c4c7ca"/></linearGradient>
<filter id="bl3" x="-0.3" y="-0.3" width="1.6" height="1.6"><feGaussianBlur stdDeviation="3.5"/></filter><filter id="bl2" x="-0.2" y="-0.2" width="1.4" height="1.4"><feGaussianBlur stdDeviation="2.2"/></filter><clipPath id="vpc"><rect x="243" y="53" width="936" height="547"/></clipPath>
</defs><g clip-path="url(#vpc)"><clipPath id="pc"><path d="M447,111 L459,113 C468,119 474,130 483,143 L532,146.3 C535,140 540,129 546.7,126.3 L574,126.3 C578,128 580,130 583,134 C589,142 596,149 606.7,149.3 C617,149.5 623,140 630.7,132.3 C636,128.5 641,126.8 646.7,126.3 L862,143 L1000,203 L1023,478 L977,545 L514.5,510 L486.4,486 L464.6,506.6 L391.6,500.6 L384.8,420.8 L412.6,381 L437.5,377.5 L437.7,355 C436,330 410,306 376,307 L369,228 L396,186 L421,188 L419.5,152 Z"/></clipPath><path d="M447,111 L459,113 C468,119 474,130 483,143 L532,146.3 C535,140 540,129 546.7,126.3 L574,126.3 C578,128 580,130 583,134 C589,142 596,149 606.7,149.3 C617,149.5 623,140 630.7,132.3 C636,128.5 641,126.8 646.7,126.3 L862,143 L1000,203 L1023,478 L977,545 L514.5,510 L486.4,486 L464.6,506.6 L391.6,500.6 L384.8,420.8 L412.6,381 L437.5,377.5 L437.7,355 C436,330 410,306 376,307 L369,228 L396,186 L421,188 L419.5,152 Z" fill="#d6dadd"/><g clip-path="url(#pc)"><path d="M862,143.5 L1000,203.5 L1009,330 L1006.5,329 C995,324 990,318 987,316.7 C975,313 968,310 962,306 C955,301 948,295 941,292 C932,286 925,280 916,279.5 L873.5,272.4 Z" fill="#b3b6b9"/><path d="M873.5,272.4 L916,279.5 C925,280 932,286 941,292 C948,295 955,301 962,306 C968,310 975,313 987,316.7 C990,318 995,324 1009,330 L1023,478 C1018,470 1015,466 1011.8,462 C1005,457 998,452 990.6,448 C980,441 970,436 962,433.8 C950,425 935,417 923,416 L878,417 Z" fill="url(#curv)"/><g clip-path="url(#pc)"><g filter="url(#bl3)"><path d="M920,300 C900,305 886,315 888,330 C890,350 896,370 905,382 C920,398 940,410 962,427 C966,432 968,436 970,438 C985,430 995,415 998,395 C1000,375 996,355 985,345 C975,338 965,340 958,342 C955,330 950,315 945,308 C938,300 930,298 920,300 Z" fill="#bdc0c3"/><path d="M995,330 C1005,360 1008,420 1006,455 L1020,465 L1010,330 Z" fill="#b6b9bc"/><path d="M878,285 C882,330 886,380 895,416 L878,417 Z" fill="#d8dbde"/></g></g><polygon points="566,370 600,392 642,397 700,401 800,409 878,417 933,422 976.8,441 1008,460.6 1023,478 977,545 514.5,509.6 486.4,486 480,480" fill="#a7aaad"/><polygon points="447,111 453,190 430,232 432.3,270.6 427.6,272 421,188 419.5,152" fill="#a4a7aa"/><polygon points="396,186 369,228 374,307 402.6,267" fill="#9fa2a5"/><polygon points="396,186 421,188 427.6,272 402.6,267" fill="#d6dadd"/><path d="M374,307 L403.9,266.8 C412,266 420,266 428.7,269 C445,276 458,288 467,300.6 L463.7,304 L437.7,344.6 L437.7,355 C436,330 410,306 376,307 Z" fill="url(#wallg)"/><polygon points="463.7,304 467,300.6 470,385 438,381 437.7,344.6" fill="#9c9fa2"/><path d="M453,190 C492,196 520,225 520,255 C520,285 497,304 472,304 L467,300.6 C458,288 445,276 432,271 L427.6,231.4 Z" fill="url(#pocket)"/><polygon points="430.2,232 445.2,234.5 446.5,244.8 456.8,252.6 458,283.5 432.3,270.6" fill="#d6dadd"/><polygon points="457.4,252.3 471,265.8 458.6,284" fill="#94979a"/><polygon points="566,370 642,397 514,510 486.4,486" fill="#b1b4b7"/><polygon points="438,381 469.5,384.5 444,422 446.5,424.4 448,454 443.4,461.9" fill="#9fa2a5"/><polygon points="469.5,384.5 544.4,391.8 514,437 486.4,437.7 473,438 462,436 462,426 444,422" fill="#a8abae"/><polygon points="391.6,500.6 418.7,460.7 443.4,461.9 448,454 473,455 486.4,437.7 514,437 464.6,506.6" fill="#aeb1b4"/><polygon points="473,438 486.4,437.7 473,455" fill="#9c9fa2"/><polygon points="412.6,381 438,381 443.4,461.9 418.7,460.7" fill="#d6dadd"/><polygon points="412.6,381 384.8,420.8 391.6,500.6 418.7,460.7" fill="#a3a6a9"/><polygon points="446.5,424.4 462,426 462,436 473,438 473,454.6 448,454" fill="#d6dadd"/><polygon points="544.4,391.8 566,370 486.4,486 464.6,506.6" fill="#8e9194"/></g><path d="M584.5,231.6 C600,205 630,193 650,196 C690,200 728,240 725,282 C724,296 718,308 709.8,315.6 C705,280 685,240 650,224 C625,214 600,220 584.5,231.6 Z" fill="url(#cres)"/><path d="M590.5,270.4 C600,248 620,238 640,240 C668,245 690,275 686.5,300 C685,310 678,318 671,323.3 C668,295 652,270 630,263 C612,258 598,262 590.5,270.4 Z" fill="url(#cres)"/><path d="M599.3,298.9 C605,289 610,286.5 618,286.8 C635,287.5 650,302 646.7,314 C645,320 643,324 641,326.9 Z" fill="url(#cres)"/><clipPath id="hc1"><ellipse cx="645.8" cy="169.4" rx="19.5" ry="16.5" transform="rotate(35 645.8 169.4)"/></clipPath><ellipse cx="645.8" cy="169.4" rx="21.3" ry="18.3" transform="rotate(35 645.8 169.4)" fill="none" stroke="#9adbe8" stroke-width="2.6" opacity="0.95"/><ellipse cx="645.8" cy="169.4" rx="19.5" ry="16.5" transform="rotate(35 645.8 169.4)" fill="url(#hg)"/><g clip-path="url(#hc1)"><ellipse cx="622.2" cy="203.0" rx="36.1" ry="30.5" transform="rotate(35 622.2 203.0)" fill="#ffffff"/></g><clipPath id="hc2"><ellipse cx="577.9" cy="190.3" rx="21.8" ry="18.3" transform="rotate(38 577.9 190.3)"/></clipPath><ellipse cx="577.9" cy="190.3" rx="21.8" ry="18.3" transform="rotate(38 577.9 190.3)" fill="url(#hg)"/><g clip-path="url(#hc2)"><ellipse cx="551.7" cy="227.7" rx="40.3" ry="33.9" transform="rotate(38 551.7 227.7)" fill="#ffffff"/></g><ellipse cx="577.9" cy="190.3" rx="21.8" ry="18.3" transform="rotate(38 577.9 190.3)" fill="none" stroke="#111" stroke-width="1.9"/><clipPath id="hc3"><ellipse cx="719.2" cy="202" rx="21.8" ry="18.3" transform="rotate(38 719.2 202)"/></clipPath><ellipse cx="719.2" cy="202" rx="21.8" ry="18.3" transform="rotate(38 719.2 202)" fill="url(#hg)"/><g clip-path="url(#hc3)"><ellipse cx="693.0" cy="239.4" rx="40.3" ry="33.9" transform="rotate(38 693.0 239.4)" fill="#ffffff"/></g><ellipse cx="719.2" cy="202" rx="21.8" ry="18.3" transform="rotate(38 719.2 202)" fill="none" stroke="#111" stroke-width="1.9"/><clipPath id="hc4"><ellipse cx="554.4" cy="254" rx="21.8" ry="18.3" transform="rotate(38 554.4 254)"/></clipPath><ellipse cx="554.4" cy="254" rx="21.8" ry="18.3" transform="rotate(38 554.4 254)" fill="url(#hg)"/><g clip-path="url(#hc4)"><ellipse cx="528.2" cy="291.4" rx="40.3" ry="33.9" transform="rotate(38 528.2 291.4)" fill="#ffffff"/></g><ellipse cx="554.4" cy="254" rx="21.8" ry="18.3" transform="rotate(38 554.4 254)" fill="none" stroke="#111" stroke-width="1.9"/><clipPath id="hc5"><ellipse cx="589.2" cy="323.2" rx="21.8" ry="18.3" transform="rotate(38 589.2 323.2)"/></clipPath><ellipse cx="589.2" cy="323.2" rx="21.8" ry="18.3" transform="rotate(38 589.2 323.2)" fill="url(#hg)"/><g clip-path="url(#hc5)"><ellipse cx="563.0" cy="360.6" rx="40.3" ry="33.9" transform="rotate(38 563.0 360.6)" fill="#ffffff"/></g><ellipse cx="589.2" cy="323.2" rx="21.8" ry="18.3" transform="rotate(38 589.2 323.2)" fill="none" stroke="#111" stroke-width="1.9"/><clipPath id="hc6"><ellipse cx="730.5" cy="334.1" rx="21.8" ry="18.3" transform="rotate(38 730.5 334.1)"/></clipPath><ellipse cx="730.5" cy="334.1" rx="21.8" ry="18.3" transform="rotate(38 730.5 334.1)" fill="url(#hg)"/><g clip-path="url(#hc6)"><ellipse cx="704.3" cy="371.5" rx="40.3" ry="33.9" transform="rotate(38 704.3 371.5)" fill="#ffffff"/></g><ellipse cx="730.5" cy="334.1" rx="21.8" ry="18.3" transform="rotate(38 730.5 334.1)" fill="none" stroke="#111" stroke-width="1.9"/><clipPath id="hc7"><ellipse cx="662.6" cy="360.1" rx="21.8" ry="18.3" transform="rotate(38 662.6 360.1)"/></clipPath><ellipse cx="662.6" cy="360.1" rx="21.8" ry="18.3" transform="rotate(38 662.6 360.1)" fill="url(#hg)"/><g clip-path="url(#hc7)"><ellipse cx="636.4" cy="397.5" rx="40.3" ry="33.9" transform="rotate(38 636.4 397.5)" fill="#ffffff"/></g><ellipse cx="662.6" cy="360.1" rx="21.8" ry="18.3" transform="rotate(38 662.6 360.1)" fill="none" stroke="#111" stroke-width="1.9"/><clipPath id="hc8"><ellipse cx="754" cy="270.8" rx="20.5" ry="17" transform="rotate(38 754 270.8)"/></clipPath><ellipse cx="754" cy="270.8" rx="20.5" ry="17" transform="rotate(38 754 270.8)" fill="url(#hg)"/><g clip-path="url(#hc8)"><ellipse cx="729.5" cy="305.8" rx="37.9" ry="31.5" transform="rotate(38 729.5 305.8)" fill="#ffffff"/></g><clipPath id="conec"><ellipse cx="515" cy="342" rx="37.5" ry="32" transform="rotate(28 515 342)"/></clipPath><g clip-path="url(#conec)"><g filter="url(#bl2)"><rect x="460" y="290" width="120" height="110" fill="#c4c5c7"/><polygon points="504,358.8 460,290 470,290 518,290" fill="#d3d4d6"/><polygon points="504,358.8 460,290 460,345" fill="#c9cacc"/><polygon points="504,358.8 512,290 566,318" fill="url(#conew)"/><polygon points="504,358.8 566,318 580,380" fill="#d2d3d5"/><polygon points="504,358.8 580,372 560,400" fill="#bfc0c2"/><polygon points="504,358.8 560,400 460,400 460,370" fill="#c2c3c5"/></g></g><ellipse cx="818" cy="194.5" rx="37.5" ry="32.5" transform="rotate(28 818 194.5)" fill="url(#sph)"/><ellipse cx="938.7" cy="247" rx="28" ry="44.5" transform="rotate(-18 938.7 247)" fill="url(#rhole)"/><path d="M665,454 C655,462 650,470 651.2,475 C655,498 700,513 748.4,513.2 C800,513 846,490 846,462 C846,452 840,444 830.6,438.7 C835,460 800,488 748,490 C705,490 670,475 665,454 Z" fill="url(#band)"/><path d="M694.2,434.8 C710,427 725,423.2 748,423.2 C770,423.2 785,424 796.7,426 L798.7,458 L697,467.7 Z" fill="url(#boss)"/><ellipse cx="748.4" cy="467.5" rx="51.3" ry="23" transform="rotate(-3 748.4 467.5)" fill="#abaeb1"/><ellipse cx="748.4" cy="467.5" rx="35.8" ry="16.5" transform="rotate(-3 748.4 467.5)" fill="url(#boss)"/><ellipse cx="748.4" cy="463" rx="28" ry="11" transform="rotate(-3 748.4 463)" fill="#d3d4d6"/><ellipse cx="610.2" cy="481" rx="25.4" ry="12.3" fill="url(#boss)"/><path d="M584.8,481 C586,472 598,468.7 610.2,468.7 C622,468.7 634,472 635.6,481 C630,475 620,473 610,473 C598,473 590,475 584.8,481 Z" fill="#a7a8aa"/><ellipse cx="805.2" cy="329.4" rx="4.5" ry="4.2" fill="#d40000"/><ellipse cx="614.9" cy="444.4" rx="4.2" ry="2.6" fill="#e00000"/><ellipse cx="894.5" cy="479.2" rx="5.2" ry="2.7" transform="rotate(-8 894.5 479.2)" fill="#f00000"/><polyline points="574.5,120 585,121 627,162" fill="none" stroke="#1a2a30" stroke-width="0.8"/><polyline points="743,124.5 732.5,124.5 703,185.4" fill="none" stroke="#1a2a30" stroke-width="0.8"/><polyline points="609.7,383 609.7,373 641.6,353.7" fill="none" stroke="#1a2a30" stroke-width="0.8"/><rect x="505" y="98" width="69.4" height="44.5" fill="rgba(128,128,128,0.47)" stroke="rgba(20,40,45,0.75)" stroke-width="0.9"/><rect x="505" y="98" width="69.4" height="2.2" fill="#1e4f5b"/><line x1="505" y1="107.2" x2="574.4" y2="107.2" stroke="rgba(20,40,45,0.7)" stroke-width="0.8"/><line x1="505" y1="114.7" x2="574.4" y2="114.7" stroke="rgba(20,40,45,0.7)" stroke-width="0.8"/><line x1="505" y1="121.7" x2="574.4" y2="121.7" stroke="rgba(20,40,45,0.7)" stroke-width="0.8"/><line x1="505" y1="128.7" x2="574.4" y2="128.7" stroke="rgba(20,40,45,0.7)" stroke-width="0.8"/><line x1="505" y1="135.7" x2="574.4" y2="135.7" stroke="rgba(20,40,45,0.7)" stroke-width="0.8"/><line x1="513.5" y1="107.2" x2="513.5" y2="142.5" stroke="rgba(20,40,45,0.7)" stroke-width="0.8"/><line x1="538.5" y1="107.2" x2="538.5" y2="142.5" stroke="rgba(20,40,45,0.7)" stroke-width="0.8"/><rect x="506" y="101" width="5.5" height="5.5" fill="#c98b8b" stroke="#d66" stroke-width="0.5"/><line x1="513.5" y1="100.2" x2="513.5" y2="107.2" stroke="rgba(20,40,45,0.7)" stroke-width="0.8"/><text x="515.0" y="106" font-size="5.6" font-family="Liberation Sans" fill="rgba(20,30,35,0.8)">LOC1 CIR1</text><text x="537.5" y="113.4" font-size="5.4" text-anchor="end" font-family="Liberation Sans" fill="rgba(20,30,35,0.8)">MS</text><text x="506.5" y="120.3" font-size="5.4" font-family="Liberation Sans" fill="rgba(20,30,35,0.8)">X</text><text x="537.5" y="120.3" font-size="5.4" text-anchor="end" font-family="Liberation Sans" fill="rgba(20,30,35,0.8)">80.300</text><rect x="540.3" y="116.9" width="32.300000000000004" height="3" rx="1" fill="#fafafa" stroke="#555" stroke-width="0.4"/><line x1="541.3" y1="118.4" x2="571.5999999999999" y2="118.4" stroke="#999" stroke-width="0.6" stroke-dasharray="1 0.8"/><text x="506.5" y="127.3" font-size="5.4" font-family="Liberation Sans" fill="rgba(20,30,35,0.8)">Y</text><text x="537.5" y="127.3" font-size="5.4" text-anchor="end" font-family="Liberation Sans" fill="rgba(20,30,35,0.8)">161.300</text><rect x="540.3" y="123.9" width="32.300000000000004" height="3" rx="1" fill="#fafafa" stroke="#555" stroke-width="0.4"/><line x1="541.3" y1="125.4" x2="571.5999999999999" y2="125.4" stroke="#999" stroke-width="0.6" stroke-dasharray="1 0.8"/><text x="506.5" y="134.29999999999998" font-size="5.4" font-family="Liberation Sans" fill="rgba(20,30,35,0.8)">Z</text><text x="537.5" y="134.29999999999998" font-size="5.4" text-anchor="end" font-family="Liberation Sans" fill="rgba(20,30,35,0.8)">0.300</text><rect x="540.3" y="130.89999999999998" width="32.300000000000004" height="3" rx="1" fill="#fafafa" stroke="#555" stroke-width="0.4"/><line x1="541.3" y1="132.39999999999998" x2="571.5999999999999" y2="132.39999999999998" stroke="#999" stroke-width="0.6" stroke-dasharray="1 0.8"/><text x="506.5" y="141.29999999999998" font-size="5.4" font-family="Liberation Sans" fill="rgba(20,30,35,0.8)">D</text><text x="537.5" y="141.29999999999998" font-size="5.4" text-anchor="end" font-family="Liberation Sans" fill="rgba(20,30,35,0.8)">16.400</text><rect x="540.3" y="137.89999999999998" width="32.300000000000004" height="3" rx="1" fill="#fafafa" stroke="#555" stroke-width="0.4"/><line x1="541.3" y1="139.39999999999998" x2="571.5999999999999" y2="139.39999999999998" stroke="#999" stroke-width="0.6" stroke-dasharray="1 0.8"/><rect x="743.2" y="101.9" width="68.8" height="44.5" fill="rgba(128,128,128,0.47)" stroke="rgba(20,40,45,0.75)" stroke-width="0.9"/><rect x="743.2" y="101.9" width="68.8" height="2.2" fill="#c00000"/><line x1="743.2" y1="111.10000000000001" x2="812.0" y2="111.10000000000001" stroke="rgba(20,40,45,0.7)" stroke-width="0.8"/><line x1="743.2" y1="118.60000000000001" x2="812.0" y2="118.60000000000001" stroke="rgba(20,40,45,0.7)" stroke-width="0.8"/><line x1="743.2" y1="125.60000000000001" x2="812.0" y2="125.60000000000001" stroke="rgba(20,40,45,0.7)" stroke-width="0.8"/><line x1="743.2" y1="132.6" x2="812.0" y2="132.6" stroke="rgba(20,40,45,0.7)" stroke-width="0.8"/><line x1="743.2" y1="139.60000000000002" x2="812.0" y2="139.60000000000002" stroke="rgba(20,40,45,0.7)" stroke-width="0.8"/><line x1="751.7" y1="111.10000000000001" x2="751.7" y2="146.4" stroke="rgba(20,40,45,0.7)" stroke-width="0.8"/><line x1="776.7" y1="111.10000000000001" x2="776.7" y2="146.4" stroke="rgba(20,40,45,0.7)" stroke-width="0.8"/><rect x="744.2" y="104.9" width="5.5" height="5.5" fill="#c98b8b" stroke="#d66" stroke-width="0.5"/><line x1="751.7" y1="104.10000000000001" x2="751.7" y2="111.10000000000001" stroke="rgba(20,40,45,0.7)" stroke-width="0.8"/><text x="753.2" y="109.9" font-size="5.6" font-family="Liberation Sans" fill="rgba(20,30,35,0.8)">LOC2 CIR2</text><text x="775.7" y="117.30000000000001" font-size="5.4" text-anchor="end" font-family="Liberation Sans" fill="rgba(20,30,35,0.8)">MS</text><text x="744.7" y="124.2" font-size="5.4" font-family="Liberation Sans" fill="rgba(20,30,35,0.8)">X</text><text x="775.7" y="124.2" font-size="5.4" text-anchor="end" font-family="Liberation Sans" fill="rgba(20,30,35,0.8)">168.551</text><rect x="778.5" y="120.80000000000001" width="31.699999999999996" height="3" rx="1" fill="#fafafa" stroke="#555" stroke-width="0.4"/><line x1="779.5" y1="122.30000000000001" x2="809.2" y2="122.30000000000001" stroke="#999" stroke-width="0.6" stroke-dasharray="1 0.8"/><rect x="794.35" y="120.80000000000001" width="15.849999999999998" height="3" rx="1" fill="#e00000"/><text x="744.7" y="131.20000000000002" font-size="5.4" font-family="Liberation Sans" fill="rgba(20,30,35,0.8)">Y</text><text x="775.7" y="131.20000000000002" font-size="5.4" text-anchor="end" font-family="Liberation Sans" fill="rgba(20,30,35,0.8)">88.551</text><rect x="778.5" y="127.80000000000001" width="31.699999999999996" height="3" rx="1" fill="#fafafa" stroke="#555" stroke-width="0.4"/><line x1="779.5" y1="129.3" x2="809.2" y2="129.3" stroke="#999" stroke-width="0.6" stroke-dasharray="1 0.8"/><text x="744.7" y="138.2" font-size="5.4" font-family="Liberation Sans" fill="rgba(20,30,35,0.8)">Z</text><text x="775.7" y="138.2" font-size="5.4" text-anchor="end" font-family="Liberation Sans" fill="rgba(20,30,35,0.8)">0.000</text><rect x="778.5" y="134.79999999999998" width="31.699999999999996" height="3" rx="1" fill="#fafafa" stroke="#555" stroke-width="0.4"/><line x1="779.5" y1="136.29999999999998" x2="809.2" y2="136.29999999999998" stroke="#999" stroke-width="0.6" stroke-dasharray="1 0.8"/><text x="744.7" y="145.20000000000002" font-size="5.4" font-family="Liberation Sans" fill="rgba(20,30,35,0.8)">D</text><text x="775.7" y="145.20000000000002" font-size="5.4" text-anchor="end" font-family="Liberation Sans" fill="rgba(20,30,35,0.8)">16.400</text><rect x="778.5" y="141.8" width="31.699999999999996" height="3" rx="1" fill="#fafafa" stroke="#555" stroke-width="0.4"/><line x1="779.5" y1="143.3" x2="809.2" y2="143.3" stroke="#999" stroke-width="0.6" stroke-dasharray="1 0.8"/><rect x="577.4" y="383.4" width="65" height="44.5" fill="rgba(128,128,128,0.47)" stroke="rgba(20,40,45,0.75)" stroke-width="0.9"/><rect x="577.4" y="383.4" width="65" height="2.2" fill="#d00000"/><line x1="577.4" y1="392.59999999999997" x2="642.4" y2="392.59999999999997" stroke="rgba(20,40,45,0.7)" stroke-width="0.8"/><line x1="577.4" y1="400.09999999999997" x2="642.4" y2="400.09999999999997" stroke="rgba(20,40,45,0.7)" stroke-width="0.8"/><line x1="577.4" y1="407.09999999999997" x2="642.4" y2="407.09999999999997" stroke="rgba(20,40,45,0.7)" stroke-width="0.8"/><line x1="577.4" y1="414.09999999999997" x2="642.4" y2="414.09999999999997" stroke="rgba(20,40,45,0.7)" stroke-width="0.8"/><line x1="577.4" y1="421.09999999999997" x2="642.4" y2="421.09999999999997" stroke="rgba(20,40,45,0.7)" stroke-width="0.8"/><line x1="585.9" y1="392.59999999999997" x2="585.9" y2="427.9" stroke="rgba(20,40,45,0.7)" stroke-width="0.8"/><line x1="610.9" y1="392.59999999999997" x2="610.9" y2="427.9" stroke="rgba(20,40,45,0.7)" stroke-width="0.8"/><rect x="578.4" y="386.4" width="5.5" height="5.5" fill="#c98b8b" stroke="#d66" stroke-width="0.5"/><line x1="585.9" y1="385.59999999999997" x2="585.9" y2="392.59999999999997" stroke="rgba(20,40,45,0.7)" stroke-width="0.8"/><text x="587.4" y="391.4" font-size="5.6" font-family="Liberation Sans" fill="rgba(20,30,35,0.8)">LOC3 CIR5</text><text x="609.9" y="398.79999999999995" font-size="5.4" text-anchor="end" font-family="Liberation Sans" fill="rgba(20,30,35,0.8)">MS</text><text x="578.9" y="405.7" font-size="5.4" font-family="Liberation Sans" fill="rgba(20,30,35,0.8)">X</text><text x="609.9" y="405.7" font-size="5.4" text-anchor="end" font-family="Liberation Sans" fill="rgba(20,30,35,0.8)">80.06</text><rect x="612.6999999999999" y="402.29999999999995" width="27.9" height="3" rx="1" fill="#fafafa" stroke="#555" stroke-width="0.4"/><line x1="613.6999999999999" y1="403.79999999999995" x2="639.5999999999999" y2="403.79999999999995" stroke="#999" stroke-width="0.6" stroke-dasharray="1 0.8"/><text x="578.9" y="412.7" font-size="5.4" font-family="Liberation Sans" fill="rgba(20,30,35,0.8)">Y</text><text x="609.9" y="412.7" font-size="5.4" text-anchor="end" font-family="Liberation Sans" fill="rgba(20,30,35,0.8)">17.06</text><rect x="612.6999999999999" y="409.29999999999995" width="27.9" height="3" rx="1" fill="#fafafa" stroke="#555" stroke-width="0.4"/><line x1="613.6999999999999" y1="410.79999999999995" x2="639.5999999999999" y2="410.79999999999995" stroke="#999" stroke-width="0.6" stroke-dasharray="1 0.8"/><rect x="626.65" y="409.29999999999995" width="13.95" height="3" rx="1" fill="#e00000"/><text x="578.9" y="419.7" font-size="5.4" font-family="Liberation Sans" fill="rgba(20,30,35,0.8)">Z</text><text x="609.9" y="419.7" font-size="5.4" text-anchor="end" font-family="Liberation Sans" fill="rgba(20,30,35,0.8)">0.006</text><rect x="612.6999999999999" y="416.29999999999995" width="27.9" height="3" rx="1" fill="#fafafa" stroke="#555" stroke-width="0.4"/><line x1="613.6999999999999" y1="417.79999999999995" x2="639.5999999999999" y2="417.79999999999995" stroke="#999" stroke-width="0.6" stroke-dasharray="1 0.8"/><text x="578.9" y="426.7" font-size="5.4" font-family="Liberation Sans" fill="rgba(20,30,35,0.8)">D</text><text x="609.9" y="426.7" font-size="5.4" text-anchor="end" font-family="Liberation Sans" fill="rgba(20,30,35,0.8)">16.46</text><rect x="612.6999999999999" y="423.29999999999995" width="27.9" height="3" rx="1" fill="#fafafa" stroke="#555" stroke-width="0.4"/><line x1="613.6999999999999" y1="424.79999999999995" x2="639.5999999999999" y2="424.79999999999995" stroke="#999" stroke-width="0.6" stroke-dasharray="1 0.8"/><rect x="557.7" y="184" width="16" height="9.5" fill="#b4b5b7" stroke="#1a1a1a" stroke-width="0.8"/><rect x="557.7" y="184" width="16" height="2.2" fill="#111"/><text x="565.7" y="192.3" font-size="5.6" text-anchor="middle" font-family="Liberation Sans" fill="#333">CIR8</text><rect x="534.7" y="247.8" width="16.5" height="9.5" fill="#b4b5b7" stroke="#1a1a1a" stroke-width="0.8"/><rect x="534.7" y="247.8" width="16.5" height="2.2" fill="#111"/><text x="542.95" y="256.1" font-size="5.6" text-anchor="middle" font-family="Liberation Sans" fill="#333">CIR7</text><rect x="569.5" y="316.5" width="15.5" height="9.5" fill="#b4b5b7" stroke="#1a1a1a" stroke-width="0.8"/><rect x="569.5" y="316.5" width="15.5" height="2.2" fill="#111"/><text x="577.25" y="324.8" font-size="5.6" text-anchor="middle" font-family="Liberation Sans" fill="#333">CIR6</text><rect x="710.8" y="327" width="15.5" height="9.5" fill="#b4b5b7" stroke="#1a1a1a" stroke-width="0.8"/><rect x="710.8" y="327" width="15.5" height="2.2" fill="#111"/><text x="718.55" y="335.3" font-size="5.6" text-anchor="middle" font-family="Liberation Sans" fill="#333">CIR4</text><rect x="441.7" y="369.5" width="17" height="9.5" fill="#b4b5b7" stroke="#1a1a1a" stroke-width="0.8"/><rect x="441.7" y="369.5" width="17" height="2.2" fill="#111"/><text x="450.2" y="377.8" font-size="5.6" text-anchor="middle" font-family="Liberation Sans" fill="#333">PNT1</text><path d="M467,384 L467,357" stroke="#3c9a3c" stroke-width="2.6"/><path d="M462,360 L467,347 L472,360z" fill="#46a846"/><path d="M468,384 L500,386" stroke="#d43a3a" stroke-width="2.6"/><path d="M497,381 L512,386.5 L497,391z" fill="#d84040"/><path d="M468,383 L480,372" stroke="#3aa0c0" stroke-width="2.6"/><path d="M475,368 L487,364 L484,376z" fill="#3aa6c6"/><text x="514" y="389" font-size="5" fill="#d44" font-family="Liberation Sans">x</text><text x="464" y="347" font-size="5" fill="#4a4" font-family="Liberation Sans">y</text><text x="486" y="366" font-size="5" fill="#4ac" font-family="Liberation Sans">z</text><g fill="none" stroke="#dfe2e5" stroke-width="0.8" opacity="0.9"><path d="M816,504 L838,500 L830,514 L808,518 Z M822,514 L855,507 L848,520 L814,524 Z M816,504 L830,514 M838,500 L823,523 M808,518 L848,520"/></g><g transform="translate(862,518.5) rotate(3.7) skewX(-14) scale(1.3,1)"><text x="0" y="0" font-size="12" font-family="Liberation Sans" fill="none" stroke="#dadde0" stroke-width="0.65" letter-spacing="3.2">HEXAGON</text></g><g stroke="#111" stroke-width="1.2" stroke-linejoin="round"><polygon points="293.7,522.1 317.9,523.6 310.7,532.7 286.5,532.3" fill="#3d8f8a"/><polygon points="286.5,532.3 310.7,532.7 312.6,557 287.9,556" fill="#2f8a6e" opacity="0.9"/><polygon points="310.7,532.7 317.9,523.6 319.4,546.3 312.6,557" fill="#5a8fa0"/></g><polygon points="293.7,522.1 286.5,532.3 287.9,556 295.7,544.4" fill="#6a5070" opacity="0.6"/><polygon points="295.7,544.4 310.7,544.4 310.7,532.7 295.7,532.7" fill="#30a0c0" opacity="0.6"/><line x1="286" y1="557" x2="322" y2="559" stroke="#e03030" stroke-width="1.6"/><line x1="286" y1="531" x2="287" y2="557" stroke="#66c030" stroke-width="1.2"/><text x="325" y="560" font-size="5" fill="#d44" font-family="Liberation Sans">x</text><text x="285" y="521" font-size="5" fill="#6b3" font-family="Liberation Sans">y</text></g></svg><div class="a" style="left:243px;top:600px;width:940px;height:3px;background:#f5f5f5"></div><div class="a" style="left:301.5px;top:603px;width:881px;height:1.2px;background:#aaaaaa"></div><div class="a" style="left:1179px;top:53px;width:4px;height:551px;background:linear-gradient(90deg,#f4f4f4 0,#f4f4f4 55%,#a9a9a9 55%,#a9a9a9 100%)"></div><div class="a" style="left:1182px;top:51px;width:18px;height:569px;background:#f0f0f0;border-left:1px solid #cfcfcf"></div><div class="a" style="left:1184px;top:52px;width:16px;height:7px;background:#f8f8f8"></div><svg class="a" style="left:1184px;top:52px" width="16" height="8" viewBox="0 0 16 8"><path d="M1.5 3.5h7" stroke="#bbb" stroke-width="1"/><path d="M10.5 1.5l4 4M14.5 1.5l-4 4" stroke="#111" stroke-width="1.4"/></svg><div class="a" style="left:1184px;top:59px;width:15px;height:51px;background:#ff0000"></div><div class="a" style="left:1184px;top:110px;width:15px;height:51px;background:#9933cc"></div><div class="a" style="left:1184px;top:161px;width:15px;height:51px;background:#9966cc"></div><div class="a" style="left:1184px;top:212px;width:15px;height:51px;background:#9999cc"></div><div class="a" style="left:1184px;top:263px;width:15px;height:51px;background:#99cccc"></div><div class="a" style="left:1184px;top:314px;width:15px;height:51px;background:#99ff99"></div><div class="a" style="left:1184px;top:365px;width:15px;height:51px;background:#66ff66"></div><div class="a" style="left:1184px;top:416px;width:15px;height:51px;background:#33ff33"></div><div class="a" style="left:1184px;top:467px;width:15px;height:51px;background:#00cc66"></div><div class="a" style="left:1184px;top:518px;width:15px;height:51px;background:#006666"></div><div class="a" style="left:1184px;top:569px;width:15px;height:61px;background:#ffff00"></div><svg class="a" style="left:1184px;top:0" width="16" height="620" viewBox="1184 0 16 620"><text x="1185" y="115" font-size="4.2" fill="#333" opacity="0.8" font-family="Liberation Sans">0.100</text><text x="1185" y="159.5" font-size="4.2" fill="#333" opacity="0.8" font-family="Liberation Sans">0.089</text><text x="1185" y="166" font-size="4.2" fill="#333" opacity="0.8" font-family="Liberation Sans">0.089</text><text x="1185" y="210.5" font-size="4.2" fill="#333" opacity="0.8" font-family="Liberation Sans">0.078</text><text x="1185" y="217" font-size="4.2" fill="#333" opacity="0.8" font-family="Liberation Sans">0.078</text><text x="1185" y="261.5" font-size="4.2" fill="#333" opacity="0.8" font-family="Liberation Sans">0.067</text><text x="1185" y="268" font-size="4.2" fill="#333" opacity="0.8" font-family="Liberation Sans">0.067</text><text x="1185" y="312.5" font-size="4.2" fill="#333" opacity="0.8" font-family="Liberation Sans">0.056</text><text x="1185" y="319" font-size="4.2" fill="#333" opacity="0.8" font-family="Liberation Sans">0.056</text><text x="1185" y="363.5" font-size="4.2" fill="#333" opacity="0.8" font-family="Liberation Sans">0.044</text><text x="1185" y="370" font-size="4.2" fill="#333" opacity="0.8" font-family="Liberation Sans">0.044</text><text x="1185" y="414.5" font-size="4.2" fill="#333" opacity="0.8" font-family="Liberation Sans">0.033</text><text x="1185" y="421" font-size="4.2" fill="#333" opacity="0.8" font-family="Liberation Sans">0.033</text><text x="1185" y="465.5" font-size="4.2" fill="#333" opacity="0.8" font-family="Liberation Sans">0.022</text><text x="1185" y="472" font-size="4.2" fill="#333" opacity="0.8" font-family="Liberation Sans">0.022</text><text x="1185" y="516.5" font-size="4.2" fill="#333" opacity="0.8" font-family="Liberation Sans">0.011</text><text x="1185" y="523" font-size="4.2" fill="#333" opacity="0.8" font-family="Liberation Sans">0.011</text><text x="1185" y="567.5" font-size="4.2" fill="#333" opacity="0.8" font-family="Liberation Sans">0.000</text><text x="1185" y="574" font-size="4.2" fill="#333" opacity="0.8" font-family="Liberation Sans">0.000</text><text x="1190" y="68" font-size="5" fill="#600" font-family="Liberation Sans">+</text><text x="1190" y="580" font-size="5" fill="#660" font-family="Liberation Sans">-</text></svg><div class="a" style="left:243px;top:604.2px;width:939px;height:16px;background:#f0f0f0"></div><div class="a" style="left:301.5px;top:603px;width:60px;height:17px;background:#e3e3e3;border-left:1.2px solid #aaa;border-right:1.2px solid #aaa;border-top:1.2px solid #aaa"></div><svg class="a" style="left:249px;top:605px" width="13" height="14" viewBox="0 0 13 14"><path d="M6.5 0.5L12.5 3.5V10.5L6.5 13.5L0.5 10.5V3.5Z" fill="#1a9cc4"/><path d="M0.8 3.7L6.5 6.6L12.2 3.7M6.5 6.6V13" stroke="#e6f4fa" stroke-width="0.8" fill="none"/></svg><div class="a" style="left:272px;top:608px;font-size:8.5px;color:#333;letter-spacing:-0.1px">CAD</div><svg class="a" style="left:309px;top:607px" width="13" height="10" viewBox="0 0 13 10"><rect x="0.5" y="1" width="8" height="8" fill="#3a3a3a"/><path d="M8.5 5L12.5 1.5V8.5Z" fill="#3a3a3a"/></svg><div class="a" style="left:327px;top:608px;font-size:8.5px;color:#333;letter-spacing:-0.1px">VISION</div></body></html>
